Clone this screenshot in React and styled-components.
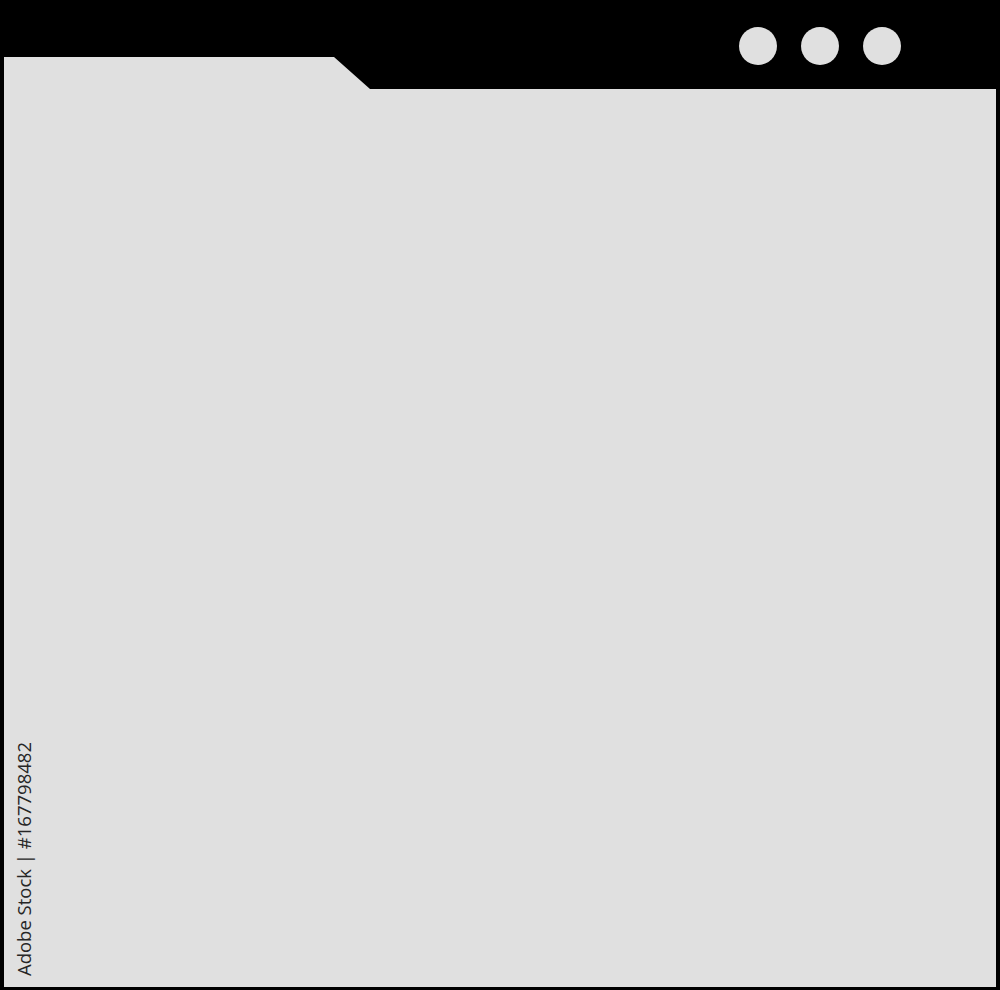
import React from "react";
import styled, { createGlobalStyle } from "styled-components";

const Global = createGlobalStyle`
  html, body { margin: 0; padding: 0; background: #000; }
  body { font-family: "Open Sans", "Noto Sans", sans-serif; }
`;

const Frame = styled.div`
  width: 1000px;
  height: 990px;
  background: #000;
  display: flex;
  flex-direction: column;
  padding: 0 4px 3px 4px;
  box-sizing: border-box;
`;

const TopBar = styled.div`
  height: 89px;
  display: flex;
  align-items: flex-end;
`;

const Tab = styled.div`
  width: 330px;
  height: 32px;
  background: #e0e0e0;
`;

const Slant = styled.svg`
  width: 36px;
  height: 32px;
  display: block;
`;

const Spacer = styled.div`
  flex: 1;
`;

const Dots = styled.div`
  align-self: flex-start;
  margin-top: 27px;
  margin-right: 95px;
  display: flex;
  gap: 24px;
`;

const Dot = styled.span`
  width: 38px;
  height: 38px;
  border-radius: 50%;
  background: #e0e0e0;
  display: block;
`;

const Body = styled.div`
  flex: 1;
  background: #e0e0e0;
  position: relative;
`;

const Credit = styled.div`
  position: absolute;
  left: 9px;
  bottom: 11px;
  writing-mode: vertical-rl;
  transform: rotate(180deg);
  font-family: "Open Sans", "Noto Sans", sans-serif;
  font-size: 18.5px;
  font-weight: 500;
  color: #262626;
  white-space: nowrap;
  line-height: 22px;
`;

export default function App() {
  return (
    <>
      <Global />
      <Frame>
        <TopBar>
          <Tab />
          <Slant viewBox="0 0 36 32" preserveAspectRatio="none">
            <polygon points="0,0 0,32 36,32" fill="#e0e0e0" />
          </Slant>
          <Spacer />
          <Dots>
            <Dot />
            <Dot />
            <Dot />
          </Dots>
        </TopBar>
        <Body>
          <Credit>Adobe Stock | #167798482</Credit>
        </Body>
      </Frame>
    </>
  );
}
